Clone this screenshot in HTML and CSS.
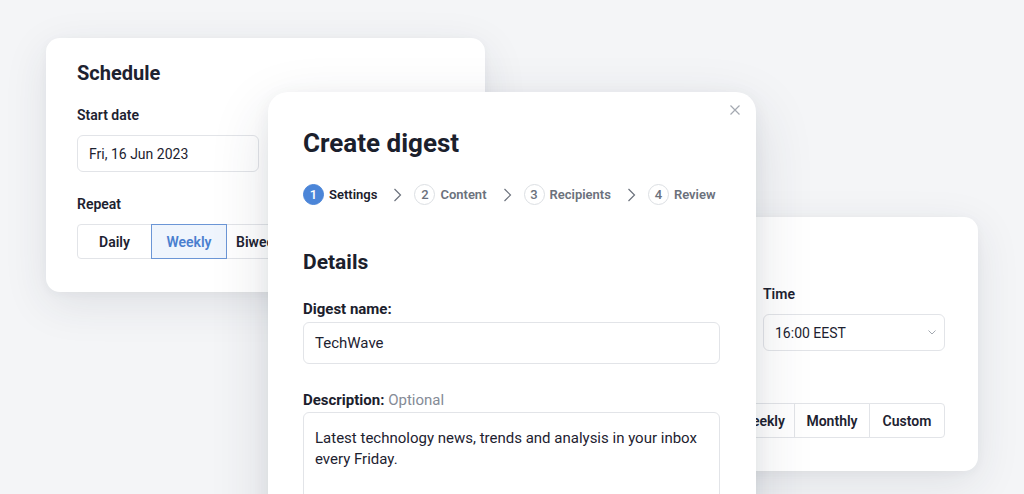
FILE: index.html
```html
<!DOCTYPE html>
<html lang="en">
<head>
<meta charset="utf-8">
<title>Create digest</title>
<link rel="stylesheet" href="styles.css">
</head>
<body>
<div class="stage">
  <section class="card card-left">
    <h2 class="card-title">Schedule</h2>
    <div class="row">
      <div class="field">
        <div class="label">Start date</div>
        <div class="input">Fri, 16 Jun 2023</div>
      </div>
      <div class="field obscured">
        <div class="label">Time</div>
        <div class="input select">16:00 EEST
          <svg class="select-chev" width="8" height="5" viewBox="0 0 8 5"><polyline points="0.5,0.5 4,4 7.5,0.5" fill="none" stroke="#a3a8b0" stroke-width="1"/></svg>
        </div>
      </div>
    </div>
    <div class="label label-repeat">Repeat</div>
    <div class="segmented">
      <div class="seg">Daily</div>
      <div class="seg seg-on">Weekly</div>
      <div class="seg">Biweekly</div>
      <div class="seg">Monthly</div>
      <div class="seg">Custom</div>
    </div>
  </section>

  <section class="card card-right">
    <h2 class="card-title obscured">Schedule</h2>
    <div class="row">
      <div class="field obscured">
        <div class="label">Start date</div>
        <div class="input">Fri, 16 Jun 2023</div>
      </div>
      <div class="field">
        <div class="label">Time</div>
        <div class="input select">16:00 EEST
          <svg class="select-chev" width="8" height="5" viewBox="0 0 8 5"><polyline points="0.5,0.5 4,4 7.5,0.5" fill="none" stroke="#a3a8b0" stroke-width="1"/></svg>
        </div>
      </div>
    </div>
    <div class="label label-repeat obscured">Repeat</div>
    <div class="segmented">
      <div class="seg">Daily</div>
      <div class="seg seg-on">Weekly</div>
      <div class="seg">Biweekly</div>
      <div class="seg">Monthly</div>
      <div class="seg">Custom</div>
    </div>
  </section>

  <section class="modal">
    <button class="close" aria-label="Close">
      <svg width="10" height="10" viewBox="0 0 10 10"><path d="M0.5 0.5 L9.5 9.5 M9.5 0.5 L0.5 9.5" stroke="#a4a9b1" stroke-width="1.2" fill="none"/></svg>
    </button>
    <h1 class="modal-title">Create digest</h1>
    <ol class="stepper">
      <li class="step step-on"><span class="num">1</span><span class="step-label">Settings</span></li>
      <li class="sep"><svg width="9" height="14" viewBox="0 0 9 14"><polyline points="1.5,1 7.5,7 1.5,13" fill="none" stroke="#6b717c" stroke-width="1.2"/></svg></li>
      <li class="step"><span class="num">2</span><span class="step-label">Content</span></li>
      <li class="sep"><svg width="9" height="14" viewBox="0 0 9 14"><polyline points="1.5,1 7.5,7 1.5,13" fill="none" stroke="#6b717c" stroke-width="1.2"/></svg></li>
      <li class="step"><span class="num">3</span><span class="step-label">Recipients</span></li>
      <li class="sep"><svg width="9" height="14" viewBox="0 0 9 14"><polyline points="1.5,1 7.5,7 1.5,13" fill="none" stroke="#6b717c" stroke-width="1.2"/></svg></li>
      <li class="step"><span class="num">4</span><span class="step-label">Review</span></li>
    </ol>
    <h2 class="section-title">Details</h2>
    <div class="form-label">Digest name:</div>
    <div class="text-input">TechWave</div>
    <div class="form-label form-label-desc">Description: <span class="optional">Optional</span></div>
    <div class="text-area">Latest technology news, trends and analysis in your inbox every Friday.</div>
  </section>
</div>
</body>
</html>
```

FILE: styles.css
```css
* { box-sizing: border-box; }

html, body {
  margin: 0;
  padding: 0;
  width: 1024px;
  height: 494px;
  overflow: hidden;
  background: #f3f4f6;
  font-family: Roboto, "Liberation Sans", Arial, sans-serif;
  color: #1d2230;
}

.stage {
  position: relative;
  width: 1024px;
  height: 494px;
  overflow: hidden;
  background: #f4f5f7;
}

.obscured { visibility: hidden; }

/* Background schedule cards */
.card {
  position: absolute;
  width: 439px;
  height: 254px;
  padding: 23px 33px 0 31px;
  background: #ffffff;
  border-radius: 14px;
  box-shadow: 0 12px 44px rgba(40, 50, 70, 0.10), 0 2px 10px rgba(40, 50, 70, 0.04);
}
.card-left { left: 46px; top: 38px; }
.card-right { left: 539px; top: 217px; }

.card-title {
  margin: 0 0 20px;
  font-size: 20px;
  line-height: 24px;
  font-weight: 700;
  color: #1d2230;
}

.row {
  display: grid;
  grid-template-columns: 182px 182px;
  column-gap: 11px;
}

.label {
  font-size: 14px;
  line-height: 20px;
  font-weight: 600;
  margin-bottom: 10px;
  color: #1d2230;
}
.label-repeat { margin-top: 22px; }

.input {
  height: 37px;
  border: 1px solid #e2e4e8;
  border-radius: 6px;
  padding: 0 11px;
  display: flex;
  align-items: center;
  font-size: 14px;
  color: #1d2230;
}
.select { justify-content: space-between; padding-right: 8px; }
.select-chev { display: block; }

.segmented {
  display: grid;
  grid-template-columns: repeat(5, 75px);
}
.seg {
  height: 35px;
  display: flex;
  align-items: center;
  justify-content: center;
  font-size: 14px;
  font-weight: 600;
  color: #1d2230;
  border: 1px solid #e2e4e8;
  margin-left: -1px;
  background: #fff;
}
.seg:first-child { margin-left: 0; border-radius: 4px 0 0 4px; }
.seg:last-child { border-radius: 0 4px 4px 0; }
.seg-on {
  position: relative;
  z-index: 1;
  border-color: #6b96d6;
  background: #eff5fd;
  color: #4a7fcf;
}

/* Modal */
.modal {
  position: absolute;
  left: 268px;
  top: 92px;
  width: 488px;
  height: 480px;
  padding: 35px 36px 0 35px;
  background: #ffffff;
  border-radius: 20px;
  box-shadow: 0 20px 60px rgba(40, 50, 70, 0.14), 0 4px 18px rgba(40, 50, 70, 0.06);
  z-index: 2;
}

.close {
  position: absolute;
  right: 16px;
  top: 13px;
  width: 10px;
  height: 10px;
  padding: 0;
  border: 0;
  background: none;
}
.close svg { display: block; }

.modal-title {
  margin: 0;
  font-size: 26px;
  line-height: 32px;
  font-weight: 700;
  color: #1b202c;
}

.stepper {
  list-style: none;
  margin: 25px 0 0;
  padding: 0;
  display: flex;
  align-items: center;
  height: 21px;
}
.step {
  display: flex;
  align-items: center;
}
.num {
  width: 21px;
  height: 21px;
  border-radius: 50%;
  border: 1px solid #dcdfe3;
  display: flex;
  align-items: center;
  justify-content: center;
  font-size: 13px;
  font-weight: 500;
  color: #6b717c;
}
.step-label {
  margin-left: 5px;
  font-size: 13px;
  font-weight: 600;
  color: #6b717c;
}
.step-on .num {
  background: #4b85d8;
  border-color: #4b85d8;
  color: #ffffff;
}
.step-on .step-label { color: #1b202c; }
.sep {
  display: flex;
  align-items: center;
  margin: 0 12px 0 16px;
}
.sep svg { display: block; }

.section-title {
  margin: 44px 0 0;
  font-size: 21px;
  line-height: 26px;
  font-weight: 700;
  color: #1b202c;
}

.form-label {
  margin-top: 24px;
  font-size: 15px;
  line-height: 20px;
  font-weight: 700;
  color: #1b202c;
}
.form-label-desc { margin-top: 26px; }
.optional { font-weight: 400; color: #858b96; }

.text-input {
  margin-top: 3px;
  height: 42px;
  border: 1px solid #e2e4e8;
  border-radius: 6px;
  padding: 0 11px;
  display: flex;
  align-items: center;
  font-size: 15px;
  color: #1d2230;
}

.text-area {
  margin-top: 2px;
  height: 110px;
  border: 1px solid #e2e4e8;
  border-radius: 6px;
  padding: 15px 11px;
  font-size: 15px;
  line-height: 21px;
  color: #1d2230;
}
```
